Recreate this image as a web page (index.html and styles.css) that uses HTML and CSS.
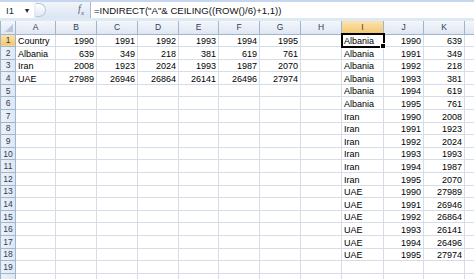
FILE: index.html
```html
<!DOCTYPE html>
<html lang="en">
  <head>
    <meta charset="UTF-8" />
    <title>Sheet1</title>
    <link rel="stylesheet" href="styles.css">
  </head>
  <body>
    <div class="formula-bar">
      <div class="name-box">
        <span>I1</span>
        <span class="drop">&#9662;</span>
      </div>
      <div class="bar-tools">
        <span class="grip"></span>
        <span class="fx">f<sub>x</sub></span>
      </div>
      <div class="formula">=INDIRECT("A"&amp; CEILING((ROW()/6)+1,1))</div>
    </div>

    <div class="grid-wrap">
      <table class="sheet">
        <colgroup>
          <col class="c-head" />
          <col style="width:40px" /><col style="width:41px" /><col style="width:41px" />
          <col style="width:41px" /><col style="width:40px" /><col style="width:41px" />
          <col style="width:41px" /><col style="width:41px" /><col style="width:42px" />
          <col style="width:40px" /><col style="width:41px" /><col style="width:10px" />
        </colgroup>
        <thead>
          <tr>
            <th class="corner"><span class="tri"></span></th>
            <th>A</th><th>B</th><th>C</th><th>D</th><th>E</th><th>F</th>
            <th>G</th><th>H</th><th class="active">I</th><th>J</th><th>K</th><th></th>
          </tr>
        </thead>
        <tbody id="rows"></tbody>
      </table>
    </div>

    <script>
      const left = [
        ["Country", 1990, 1991, 1992, 1993, 1994, 1995],
        ["Albania", 639, 349, 218, 381, 619, 761],
        ["Iran", 2008, 1923, 2024, 1993, 1987, 2070],
        ["UAE", 27989, 26946, 26864, 26141, 26496, 27974],
      ];
      const values = {
        Albania: [639, 349, 218, 381, 619, 761],
        Iran: [2008, 1923, 2024, 1993, 1987, 2070],
        UAE: [27989, 26946, 26864, 26141, 26496, 27974],
      };
      const countries = ["Albania", "Iran", "UAE"];
      const body = document.getElementById("rows");

      for (let r = 1; r <= 20; r++) {
        const tr = document.createElement("tr");
        // row 20 is only a sliver at the bottom, its number is out of view
        let cells = `<th class="${r === 1 ? "active" : ""}">${r < 20 ? r : ""}</th>`;
        const data = left[r - 1] || [];
        for (let c = 0; c < 7; c++) {
          const v = data[c];
          const cls = v === undefined ? "" : typeof v === "number" ? "num" : "txt";
          cells += `<td class="${cls}">${v === undefined ? "" : v}</td>`;
        }
        cells += "<td></td>";
        if (r <= 18) {
          const name = countries[Math.floor((r - 1) / 6)];
          const i = (r - 1) % 6;
          cells += `<td class="txt${r === 1 ? " selected" : ""}">${name}</td>`;
          cells += `<td class="num">${1990 + i}</td>`;
          cells += `<td class="num">${values[name][i]}</td>`;
        } else {
          cells += "<td></td><td></td><td></td>";
        }
        cells += "<td></td>";
        tr.innerHTML = cells;
        body.appendChild(tr);
      }
    </script>
  </body>
</html>
```

FILE: styles.css
```css
* {
  margin: 0;
  padding: 0;
  box-sizing: border-box;
}

body {
  width: 474px;
  height: 279px;
  overflow: hidden;
  background: #ffffff;
  font-family: "Liberation Sans", Arial, sans-serif;
  color: #000000;
}

/* formula bar */
.formula-bar {
  height: 21px;
  display: flex;
  background: #dfe8f5;
  border-top: 2px solid #c5d6ee;
  padding-bottom: 3px;
}

.name-box {
  width: 34px;
  display: flex;
  align-items: center;
  justify-content: space-between;
  padding: 0 5px 0 6px;
  background: #ffffff;
  font-size: 9.5px;
  color: #1e2b3c;
}

.drop {
  font-size: 8px;
  color: #222222;
}

.bar-tools {
  width: 56px;
  display: flex;
  align-items: center;
  justify-content: space-between;
  padding: 0 6px 0 2px;
  background: linear-gradient(#f1f5fb, #dbe5f3);
}

.grip {
  width: 10px;
  height: 14px;
  border-radius: 0 8px 8px 0;
  border: 1px solid #b9c8dc;
  border-left: none;
  background: linear-gradient(#ffffff, #e3e9f2);
}

.fx {
  font-family: "Liberation Serif", serif;
  font-style: italic;
  font-size: 10px;
  color: #55606e;
}

.fx sub {
  font-size: 7px;
}

.formula {
  flex: 1;
  display: flex;
  align-items: center;
  padding-left: 3px;
  background: #ffffff;
  border-left: 1px solid #a8bbd5;
  font-size: 9.6px;
  color: #111111;
}

/* grid */
.grid-wrap {
  width: 474px;
  overflow: hidden;
}

.sheet {
  table-layout: fixed;
  border-collapse: collapse;
  width: 474px;
  font-size: 9px;
}

.c-head {
  width: 15px;
}

.sheet thead tr {
  height: 13px;
}

.sheet tbody tr {
  height: 12.6px;
}

.sheet th {
  font-weight: normal;
  font-size: 8.5px;
  line-height: 10px;
  color: #2a3e5a;
  text-align: center;
  background: linear-gradient(#f4f7fc, #dfe6f1);
  border: 1px solid #9eb6ce;
}

.sheet thead th {
  border-top: none;
}

.sheet tbody th {
  background: linear-gradient(90deg, #edf2f9, #dde6f2);
}

.sheet th.active {
  background: linear-gradient(#fbe3b0, #f3c66d);
  color: #3a3a3a;
}

.corner {
  position: relative;
}

.tri {
  position: absolute;
  right: 2px;
  bottom: 2px;
  width: 0;
  height: 0;
  border-left: 8px solid transparent;
  border-bottom: 8px solid #b7c7dc;
}

.sheet td {
  border: 1px solid #d6dde8;
  white-space: nowrap;
  overflow: hidden;
  line-height: 10px;
  vertical-align: bottom;
}

.txt {
  text-align: left;
  padding-left: 2px;
}

.num {
  text-align: right;
  padding-right: 2px;
}

.sheet td.selected {
  position: relative;
  overflow: visible;
  outline: 2px solid #000000;
  outline-offset: -1px;
}

.selected::after {
  content: "";
  position: absolute;
  right: -3px;
  bottom: -3px;
  width: 4px;
  height: 4px;
  background: #000000;
  border: 1px solid #ffffff;
}
```
